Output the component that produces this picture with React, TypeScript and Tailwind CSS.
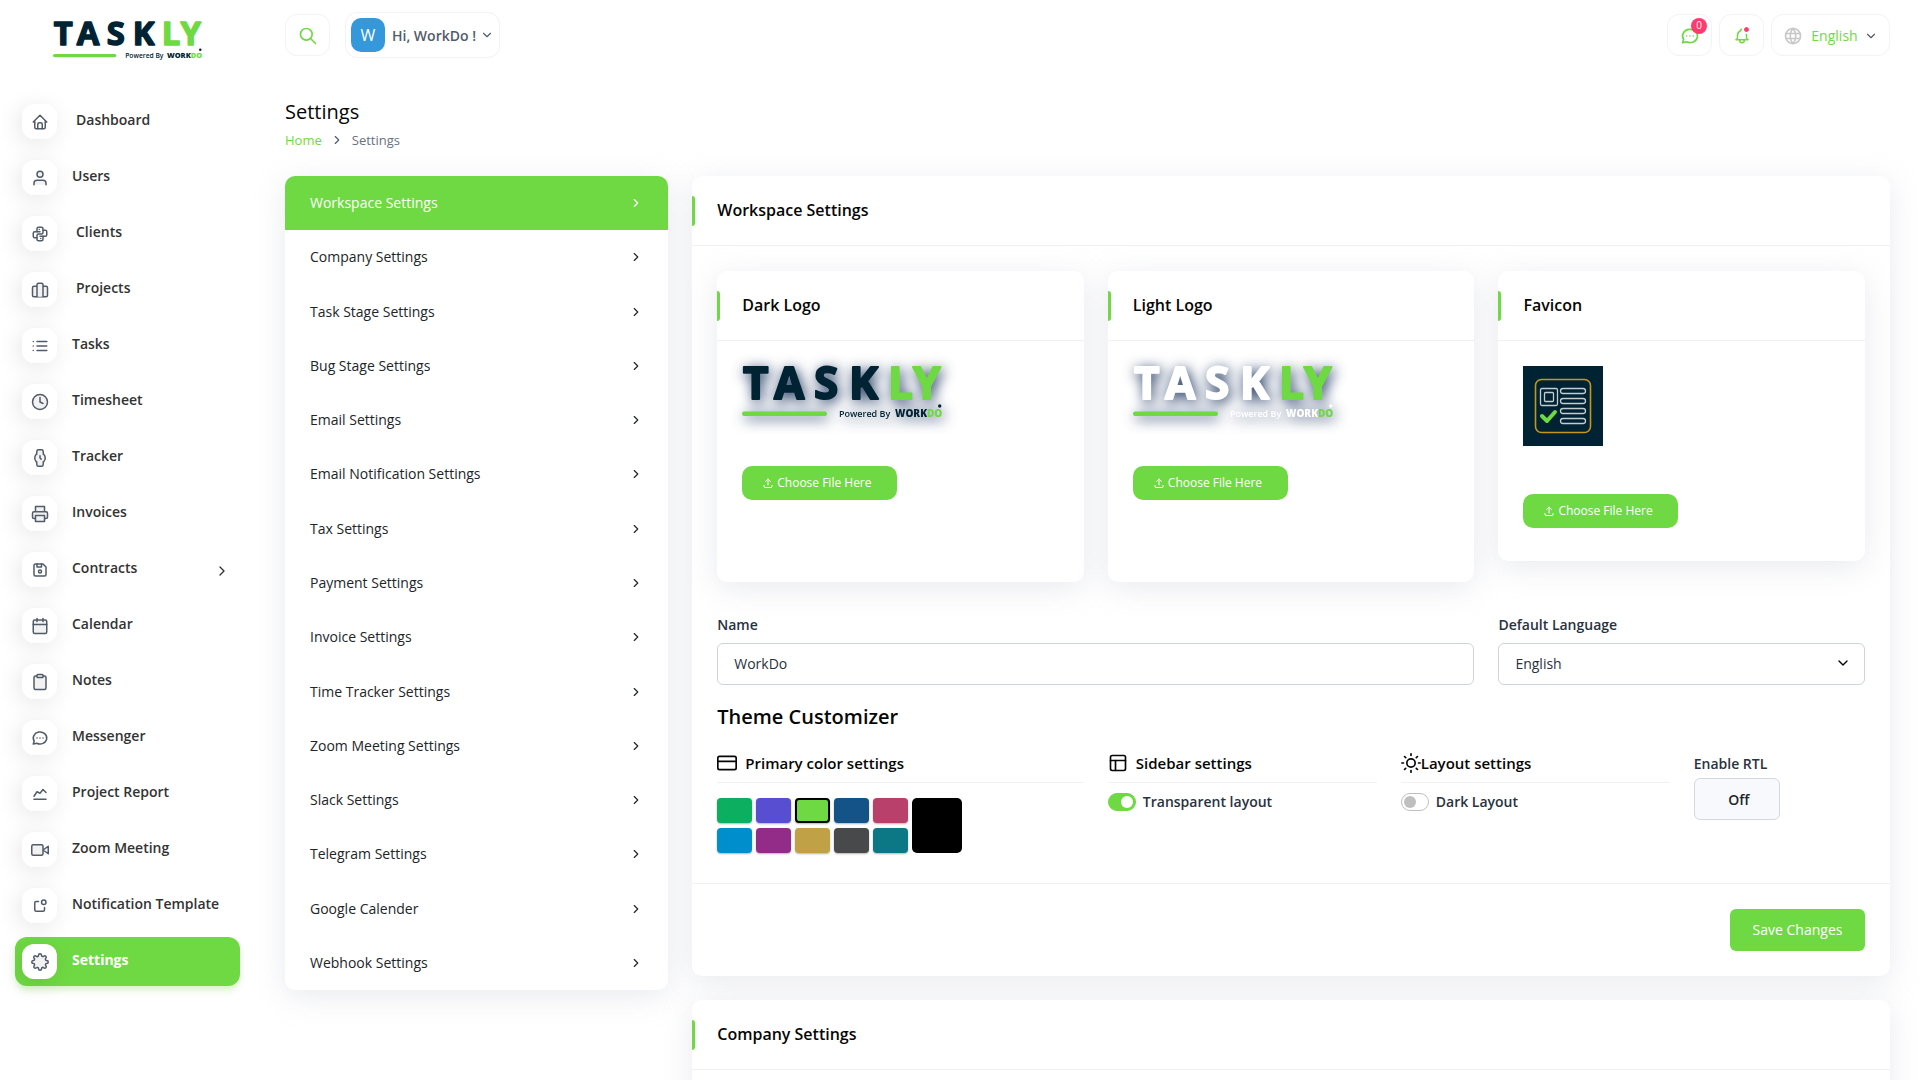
import type { ComponentType, ReactNode } from "react";
import { FiUser, FiBriefcase, FiList, FiClock, FiWatch, FiPrinter, FiCalendar, FiClipboard, FiVideo, FiSettings, FiCreditCard, FiLayout, FiSun } from "react-icons/fi";

type IconProps = { className?: string };

function Stroke({ className, children, width = 2 }: IconProps & { children: ReactNode; width?: number }) {
  return (
    <svg viewBox="0 0 24 24" fill="none" stroke="currentColor" strokeWidth={width} strokeLinecap="round" strokeLinejoin="round" aria-hidden="true" className={className}>
      {children}
    </svg>
  );
}

const HomeIcon = ({ className }: IconProps) => (
  <Stroke className={className}>
    <path d="M5 12H3l9-9 9 9h-2" />
    <path d="M5 12v7a2 2 0 0 0 2 2h10a2 2 0 0 0 2-2v-7" />
    <path d="M9 21v-6a2 2 0 0 1 2-2h2a2 2 0 0 1 2 2v6" />
  </Stroke>
);

const PythonIcon = ({ className }: IconProps) => (
  <Stroke className={className}>
    <path d="M12 9H5a2 2 0 0 0-2 2v4a2 2 0 0 0 2 2h3" />
    <path d="M12 15h7a2 2 0 0 0 2-2V9a2 2 0 0 0-2-2h-3" />
    <path d="M8 9V5a2 2 0 0 1 2-2h4a2 2 0 0 1 2 2v5a2 2 0 0 1-2 2h-4a2 2 0 0 0-2 2v5a2 2 0 0 0 2 2h4a2 2 0 0 0 2-2v-4" />
    <path d="M11 6v.01M13 18v.01" />
  </Stroke>
);

const FloppyIcon = ({ className }: IconProps) => (
  <Stroke className={className}>
    <path d="M6 4h10l4 4v10a2 2 0 0 1-2 2H6a2 2 0 0 1-2-2V6a2 2 0 0 1 2-2" />
    <circle cx="12" cy="14" r="2" />
    <path d="M14 4v4H8V4" />
  </Stroke>
);

const MessageIcon = ({ className }: IconProps) => (
  <Stroke className={className}>
    <path d="M3 20l1.3-3.9a9 8 0 1 1 3.4 2.9L3 20" />
    <path d="M12 12v.01M8 12v.01M16 12v.01" />
  </Stroke>
);

const ChartIcon = ({ className }: IconProps) => (
  <Stroke className={className}>
    <path d="M4 19h16M4 15l4-6 4 2 4-5 4 4" />
  </Stroke>
);

const NotificationIcon = ({ className }: IconProps) => (
  <Stroke className={className}>
    <path d="M10 6H7a2 2 0 0 0-2 2v9a2 2 0 0 0 2 2h9a2 2 0 0 0 2-2v-3" />
    <circle cx="17" cy="7" r="3" />
  </Stroke>
);

const SearchIcon = ({ className }: IconProps) => (
  <Stroke className={className}>
    <circle cx="10" cy="10" r="7" />
    <path d="M21 21l-6-6" />
  </Stroke>
);

const BellIcon = ({ className }: IconProps) => (
  <Stroke className={className}>
    <path d="M10 5a2 2 0 0 1 4 0a7 7 0 0 1 4 6v3a4 4 0 0 0 2 3H4a4 4 0 0 0 2-3v-3a7 7 0 0 1 4-6" />
    <path d="M9 17v1a3 3 0 0 0 6 0v-1" />
  </Stroke>
);

const WorldIcon = ({ className }: IconProps) => (
  <Stroke className={className}>
    <circle cx="12" cy="12" r="9" />
    <path d="M3.6 9h16.8M3.6 15h16.8M11.5 3a17 17 0 0 0 0 18M12.5 3a17 17 0 0 1 0 18" />
  </Stroke>
);

const UploadIcon = ({ className }: IconProps) => (
  <Stroke className={className}>
    <path d="M4 17v2a2 2 0 0 0 2 2h12a2 2 0 0 0 2-2v-2M7 9l5-5 5 5M12 4v12" />
  </Stroke>
);

const ChevronRight = ({ className }: IconProps) => (
  <Stroke className={className}>
    <path d="M9 6l6 6-6 6" />
  </Stroke>
);

const ChevronDown = ({ className }: IconProps) => (
  <Stroke className={className}>
    <path d="M6 9l6 6 6-6" />
  </Stroke>
);

function Logo({ light = false, className = "" }: { light?: boolean; className?: string }) {
  const ink = light ? "#ffffff" : "#002333";
  return (
    <svg viewBox="0 0 200 52" role="img" aria-label="Taskly, powered by WorkDo" className={`overflow-visible ${className}`}>
      <g fontFamily="'Open Sans', sans-serif" fontWeight="700" fontSize="44" strokeWidth="2" strokeLinejoin="round">
        <text y="33" fill={ink} stroke={ink}>
          <tspan x="1">T</tspan>
          <tspan x="32">A</tspan>
          <tspan x="72">S</tspan>
          <tspan x="107">K</tspan>
        </text>
        <text y="33" fill="#6fd943" stroke="#6fd943">
          <tspan x="146">L</tspan>
          <tspan x="171">Y</tspan>
        </text>
      </g>
      <rect x="0" y="45.5" width="85" height="4.5" rx="2.2" fill="#6fd943" />
      <g fontFamily="'Open Sans', sans-serif">
        <text x="97" y="50.5" fontSize="9" fontWeight="600" fill={ink}>Powered By</text>
        <text x="153" y="50.5" fontSize="10" fontWeight="800" fill={ink}>
          WORK<tspan fill="#6fd943">DO</tspan>
        </text>
      </g>
      <circle cx="197.7" cy="40" r="1.7" fill={ink} />
    </svg>
  );
}

function FaviconPicture() {
  return (
    <svg viewBox="0 0 80 80" role="img" aria-label="Favicon" className="block size-20">
      <rect width="80" height="80" fill="#002333" />
      <rect x="12.5" y="13.5" width="55" height="53" rx="6" fill="none" stroke="#c8941c" strokeWidth="1.6" />
      <g fill="none" stroke="#c3ccd1" strokeWidth="1.3">
        <rect x="17.5" y="22.5" width="17" height="17" rx="1.5" />
        <rect x="21.5" y="26.5" width="9" height="9" rx="1" />
        <rect x="37.5" y="22.5" width="25" height="5" rx="2.5" />
        <rect x="37.5" y="32.5" width="25" height="5" rx="2.5" />
        <rect x="37.5" y="42.5" width="25" height="5" rx="2.5" />
        <rect x="37.5" y="52.5" width="25" height="5" rx="2.5" />
      </g>
      <path d="M19 50l5 5 8-9" fill="none" stroke="#6fd943" strokeWidth="4" strokeLinecap="round" strokeLinejoin="round" />
    </svg>
  );
}

type NavItem = { label: string; icon: ComponentType<IconProps>; inset?: boolean; expandable?: boolean; active?: boolean };

const navItems: NavItem[] = [
  { label: "Dashboard", icon: HomeIcon, inset: true },
  { label: "Users", icon: FiUser },
  { label: "Clients", icon: PythonIcon, inset: true },
  { label: "Projects", icon: FiBriefcase, inset: true },
  { label: "Tasks", icon: FiList },
  { label: "Timesheet", icon: FiClock },
  { label: "Tracker", icon: FiWatch },
  { label: "Invoices", icon: FiPrinter },
  { label: "Contracts", icon: FloppyIcon, expandable: true },
  { label: "Calendar", icon: FiCalendar },
  { label: "Notes", icon: FiClipboard },
  { label: "Messenger", icon: MessageIcon },
  { label: "Project Report", icon: ChartIcon },
  { label: "Zoom Meeting", icon: FiVideo },
  { label: "Notification Template", icon: NotificationIcon },
  { label: "Settings", icon: FiSettings, active: true },
];

const filledIcons: ComponentType<IconProps>[] = [FiUser, FiBriefcase, FiClock, FiWatch, FiPrinter, FiCalendar, FiClipboard, FiVideo, FiSettings];

const settingsLinks = [
  "Workspace Settings",
  "Company Settings",
  "Task Stage Settings",
  "Bug Stage Settings",
  "Email Settings",
  "Email Notification Settings",
  "Tax Settings",
  "Payment Settings",
  "Invoice Settings",
  "Time Tracker Settings",
  "Zoom Meeting Settings",
  "Slack Settings",
  "Telegram Settings",
  "Google Calender",
  "Webhook Settings",
];

const swatches = [
  { name: "Green", style: "bg-[#0caf60]" },
  { name: "Violet", style: "bg-[#584ed2]" },
  { name: "Lime", style: "bg-[#6fd943] border-2 border-black", selected: true },
  { name: "Navy", style: "bg-[#145388]" },
  { name: "Rose", style: "bg-[#b9406b]" },
  { name: "Blue", style: "bg-[#008ecc]" },
  { name: "Purple", style: "bg-[#922c88]" },
  { name: "Gold", style: "bg-[#c0a145]" },
  { name: "Grey", style: "bg-[#48494b]" },
  { name: "Teal", style: "bg-[#0c7785]" },
];

function Sidebar() {
  return (
    <aside className="w-[255px] shrink-0 px-[15px]">
      <a href="#home" className="mx-[38px] mt-5 block">
        <Logo className="block w-full" />
      </a>
      <nav aria-label="Main" className="mt-[38px] flex flex-col gap-[7px]">
        {navItems.map(({ label, icon: Icon, inset, expandable, active }) => (
          <a
            key={label}
            href="#nav"
            aria-current={active ? "page" : undefined}
            className={
              active
                ? "flex items-center rounded-xl bg-[#6fd943] p-[7px] text-sm font-bold text-white shadow-[0_5px_7px_-1px_rgba(111,217,67,0.3)]"
                : "flex items-center rounded-xl p-[7px] text-sm font-semibold text-[#333333]"
            }
          >
            <span className="flex size-[35px] shrink-0 items-center justify-center rounded-xl bg-white text-[#525b69] shadow-[-3px_4px_23px_rgba(0,0,0,0.1)]">
              <Icon className={filledIcons.includes(Icon) ? "mt-0.5 size-[18px] fill-[#f2f2f2]" : "mt-0.5 size-[18px]"} />
            </span>
            <span className={inset ? "mb-[3px] ml-[19px] flex-1" : "mb-[3px] ml-[15px] flex-1"}>{label}</span>
            {expandable && <ChevronRight className="mr-[3px] mt-1 size-4" />}
          </a>
        ))}
      </nav>
    </aside>
  );
}

function TopBar() {
  const box = "flex h-[42px] items-center justify-center rounded-xl border border-[#f3f3f3] bg-white pt-0.5";
  return (
    <header className="flex h-[70px] items-center gap-[15px]">
      <button type="button" aria-label="Search" className={`${box} w-[45px] text-[#6fd943]`}>
        <SearchIcon className="size-5" />
      </button>
      <button type="button" className="flex h-[46px] items-center rounded-xl border border-[#f3f3f3] bg-white px-[5px] text-sm font-semibold text-[#525b69]">
        <span className="mr-[7px] flex size-[34px] items-center justify-center rounded-[10px] bg-[#3498db] text-base font-normal text-white">W</span>
        <span className="pt-0.5">Hi, WorkDo !</span>
        <ChevronDown className="ml-1 size-3.5" />
      </button>
      <div className="ml-auto flex items-center gap-[7px] text-[#6fd943]">
        <button type="button" aria-label="Messages" className={`${box} relative w-[45px]`}>
          <MessageIcon className="size-5" />
          <span className="absolute right-1 top-[3px] flex size-4 items-center justify-center rounded-full bg-[#ff3a6e] pb-0.5 text-[10px] leading-none text-white">0</span>
        </button>
        <button type="button" aria-label="Notifications" className={`${box} relative w-[45px]`}>
          <BellIcon className="size-[18px]" />
          <span className="absolute right-3.5 top-3 size-[5px] rounded-full bg-[#ff3a6e] outline-2 outline-white" />
        </button>
        <button type="button" className={`${box} w-[119px] text-sm font-medium`}>
          <WorldIcon className="mr-2 size-5 text-[#c8c8c8]" />
          English
          <ChevronDown className="ml-1.5 size-3.5 text-[#525b69]" />
        </button>
      </div>
    </header>
  );
}

function Card({ title, className = "", children }: { title: string; className?: string; children?: ReactNode }) {
  return (
    <section className={`rounded-[10px] bg-white shadow-[0_6px_30px_rgba(182,186,203,0.3)] ${className}`}>
      <div className="flex h-[70px] items-center border-b border-[#f1f1f1]">
        <span className="h-[30px] w-[3px] rounded-r-sm bg-[#6fd943]" />
        <h2 className="ml-[22px] pb-0.5 text-base font-semibold text-[#060606]">{title}</h2>
      </div>
      {children}
    </section>
  );
}

function ChooseFile({ id }: { id: string }) {
  return (
    <>
      <label htmlFor={id} className="flex h-[34px] w-[155px] cursor-pointer items-center rounded-[10px] bg-[#6fd943] pl-5 text-xs font-medium text-white">
        <UploadIcon className="mr-[3px] size-3" />
        Choose File Here
      </label>
      <input id={id} type="file" className="sr-only" />
    </>
  );
}

function GroupTitle({ children }: { children: ReactNode }) {
  return <h4 className="flex h-[39px] items-center border-b border-[#f1f1f1] text-[15px] font-semibold text-[#060606]">{children}</h4>;
}

function Toggle({ id, label, on = false }: { id: string; label: string; on?: boolean }) {
  return (
    <div className="mt-2.5 flex items-center">
      <input
        id={id}
        type="checkbox"
        role="switch"
        defaultChecked={on}
        className="flex h-[18px] w-7 appearance-none items-center rounded-full border border-[#bfbfbf] bg-white px-0.5 before:size-3 before:rounded-full before:bg-[#bfbfbf] checked:justify-end checked:border-[#6fd943] checked:bg-[#6fd943] checked:before:bg-white"
      />
      <label htmlFor={id} className="ml-[7px] text-sm font-semibold leading-[18px] text-[#293240]">
        {label}
      </label>
    </div>
  );
}

function WorkspaceForm() {
  return (
    <form onSubmit={(e) => e.preventDefault()}>
      <div className="px-[25px] pt-[25px]">
        <div className="grid grid-cols-3 items-start gap-6">
          <Card title="Dark Logo" className="min-h-[311px]">
            <div className="p-[25px]">
              <Logo className="mb-12 block w-[200px] drop-shadow-[2px_3px_7px_rgba(1,28,75,0.9)]" />
              <ChooseFile id="dark-logo" />
            </div>
          </Card>
          <Card title="Light Logo" className="min-h-[311px]">
            <div className="p-[25px]">
              <Logo light className="mb-12 block w-[200px] drop-shadow-[2px_3px_7px_rgba(1,28,75,0.9)]" />
              <ChooseFile id="light-logo" />
            </div>
          </Card>
          <Card title="Favicon" className="min-h-[290px]">
            <div className="flex flex-col gap-12 p-[25px]">
              <FaviconPicture />
              <div>
                <ChooseFile id="favicon" />
              </div>
            </div>
          </Card>
        </div>

        <div className="mt-8 grid grid-cols-3 gap-6 text-sm">
          <div className="col-span-2 flex flex-col gap-2">
            <label htmlFor="name" className="font-semibold leading-[21px] text-[#293240]">Name</label>
            <input id="name" defaultValue="WorkDo" className="h-[42px] rounded-md border border-[#ced4da] bg-white px-4 pb-0.5 text-[#293240]" />
          </div>
          <div className="flex flex-col gap-2">
            <label htmlFor="language" className="font-semibold leading-[21px] text-[#293240]">Default Language</label>
            <div className="relative">
              <select id="language" className="h-[42px] w-full appearance-none rounded-md border border-[#ced4da] bg-white px-4 text-[#293240]">
                <option>English</option>
              </select>
              <ChevronDown className="pointer-events-none absolute right-3.5 top-3 size-4 text-black" />
            </div>
          </div>
        </div>

        <h3 className="mt-[18px] text-xl font-semibold text-[#060606]">Theme Customizer</h3>

        <div className="mt-[13px] grid min-h-[139px] grid-cols-12 gap-6">
          <div className="col-span-4">
            <GroupTitle>
              <FiCreditCard className="mr-2 size-5" />
              Primary color settings
            </GroupTitle>
            <div className="mt-[15px] flex gap-1">
              <div className="grid grid-cols-5 gap-x-1 gap-y-[5px]">
                {swatches.map((s) => (
                  <button key={s.name} type="button" aria-label={s.name} aria-pressed={!!s.selected} className={`h-[25px] w-[35px] rounded-[4px] shadow-[0_1px_2px_rgba(0,0,0,0.3)] ${s.style}`} />
                ))}
              </div>
              <button type="button" aria-label="Custom color" className="h-[55px] w-[50px] rounded-[5px] bg-black" />
            </div>
          </div>
          <div className="col-span-3">
            <GroupTitle>
              <FiLayout className="mr-2 size-5" />
              Sidebar settings
            </GroupTitle>
            <Toggle id="transparent" label="Transparent layout" on />
          </div>
          <div className="col-span-3">
            <GroupTitle>
              <FiSun className="size-5" />
              Layout settings
            </GroupTitle>
            <Toggle id="dark" label="Dark Layout" />
          </div>
          <div className="col-span-2 flex flex-col items-start pt-[9px] text-sm">
            <span id="rtl-label" className="mb-1 font-semibold leading-[21px] text-[#293240]">Enable RTL</span>
            <button type="button" aria-labelledby="rtl-label" className="h-[42px] w-[86px] rounded-md border border-[#d5d8dc] bg-[#f8f9fd] pl-1 pt-0.5 font-semibold text-[#212529]">
              Off
            </button>
          </div>
        </div>
      </div>
      <div className="flex justify-end border-t border-[#f1f1f1] p-[25px]">
        <button type="submit" className="h-[42px] w-[135px] rounded-md bg-[#6fd943] text-sm font-medium text-white">
          Save Changes
        </button>
      </div>
    </form>
  );
}

export default function App() {
  return (
    <div className="flex h-screen overflow-hidden bg-white font-['Open_Sans',sans-serif]">
      <Sidebar />
      <div className="min-w-0 flex-1 px-[30px]">
        <TopBar />
        <div className="pt-7">
          <h1 className="text-xl font-medium text-[#060606]">Settings</h1>
          <nav aria-label="Breadcrumb" className="mt-1 flex items-center gap-2 text-[13px] leading-5">
            <a href="#home" className="text-[#6fd943]">Home</a>
            <ChevronRight className="size-3.5 text-[#525b69]" />
            <span className="text-[#687281]">Settings</span>
          </nav>
        </div>
        <main className="mt-[26px] grid grid-cols-12 items-start gap-6">
          <nav aria-label="Settings sections" className="col-span-3 grid min-h-[814px] auto-rows-fr overflow-hidden rounded-[10px] bg-white shadow-[0_6px_30px_rgba(182,186,203,0.3)]">
            {settingsLinks.map((label, i) => (
              <a
                key={label}
                href="#section"
                className={
                  i === 0
                    ? "flex items-center justify-between bg-[#6fd943] px-[25px] text-sm text-white"
                    : "flex items-center justify-between px-[25px] text-sm text-[#212529]"
                }
              >
                {label}
                <ChevronRight className="size-3.5" />
              </a>
            ))}
          </nav>
          <div className="col-span-9 flex flex-col gap-6">
            <Card title="Workspace Settings">
              <WorkspaceForm />
            </Card>
            <Card title="Company Settings" className="min-h-[300px]" />
          </div>
        </main>
      </div>
    </div>
  );
}
